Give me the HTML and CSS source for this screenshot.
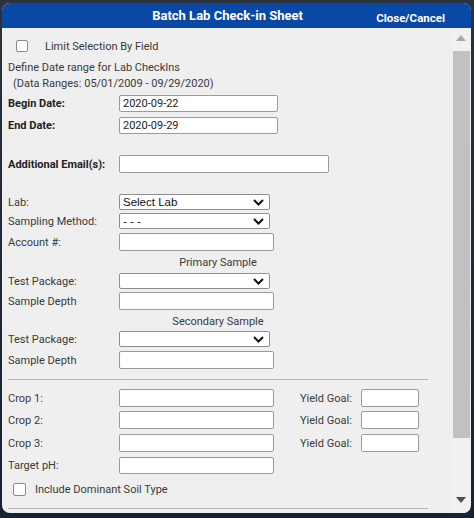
FILE: index.html
```html
<!DOCTYPE html>
<html>
<head>
<meta charset="utf-8">
<link rel="stylesheet" href="styles.css">
</head>
<body>
<div class="dialog">
  <div class="header">
    <div class="title">Batch Lab Check-in Sheet</div>
    <div class="close">Close/Cancel</div>
  </div>
  <div class="body">
    <div class="content">
      <div class="row r-first"><span class="cb cb-a"></span><span class="cb-text">Limit Selection By Field</span></div>
      <div class="text r-define">Define Date range for Lab CheckIns</div>
      <div class="text range">(Data Ranges: 05/01/2009 - 09/29/2020)</div>
      <div class="row r-begin"><span class="lbl bold">Begin Date:</span><span class="inp date">2020-09-22</span></div>
      <div class="row r-end"><span class="lbl bold">End Date:</span><span class="inp date">2020-09-29</span></div>
      <div class="row r-email"><span class="lbl bold">Additional Email(s):</span><span class="inp email"></span></div>
      <div class="row r-lab"><span class="lbl">Lab:</span><span class="sel"><span>Select Lab</span><svg width="11" height="7" viewBox="0 0 11 7"><polyline points="1,1 5.5,5.5 10,1" fill="none" stroke="#111" stroke-width="2"/></svg></span></div>
      <div class="row r-g3"><span class="lbl">Sampling Method:</span><span class="sel"><span>- - -</span><svg width="11" height="7" viewBox="0 0 11 7"><polyline points="1,1 5.5,5.5 10,1" fill="none" stroke="#111" stroke-width="2"/></svg></span></div>
      <div class="row r-g4"><span class="lbl">Account #:</span><span class="inp"></span></div>
      <div class="row r-g3 center">Primary Sample</div>
      <div class="row r-g3"><span class="lbl">Test Package:</span><span class="sel"><span></span><svg width="11" height="7" viewBox="0 0 11 7"><polyline points="1,1 5.5,5.5 10,1" fill="none" stroke="#111" stroke-width="2"/></svg></span></div>
      <div class="row r-g3"><span class="lbl">Sample Depth</span><span class="inp"></span></div>
      <div class="row r-g3 center">Secondary Sample</div>
      <div class="row r-g2"><span class="lbl">Test Package:</span><span class="sel"><span></span><svg width="11" height="7" viewBox="0 0 11 7"><polyline points="1,1 5.5,5.5 10,1" fill="none" stroke="#111" stroke-width="2"/></svg></span></div>
      <div class="row r-g4"><span class="lbl">Sample Depth</span><span class="inp"></span></div>
      <div class="rule rule-a"></div>
      <div class="row r-crop1"><span class="lbl">Crop 1:</span><span class="inp"></span><span class="yl">Yield Goal:</span><span class="inp small"></span></div>
      <div class="row r-g4"><span class="lbl">Crop 2:</span><span class="inp"></span><span class="yl">Yield Goal:</span><span class="inp small"></span></div>
      <div class="row r-g5"><span class="lbl">Crop 3:</span><span class="inp"></span><span class="yl">Yield Goal:</span><span class="inp small"></span></div>
      <div class="row r-g5"><span class="lbl">Target pH:</span><span class="inp ph"></span></div>
      <div class="row r-soil"><span class="cb cb-b"></span><span class="cb-text2">Include Dominant Soil Type</span></div>
      <div class="rule rule-b"></div>
    </div>
    <div class="scrollbar">
      <svg class="arrow-up" width="10" height="6" viewBox="0 0 10 6"><polygon points="0,6 5,0 10,6" fill="#a8a8a8"/></svg>
      <div class="thumb"></div>
      <div class="track-rest"></div>
      <svg class="arrow-down" width="10" height="6" viewBox="0 0 10 6"><polygon points="0,0 10,0 5,6" fill="#505050"/></svg>
    </div>
  </div>
</div>
</body>
</html>
```
FILE: styles.css
```css
html, body {
  margin: 0;
  padding: 0;
}
body {
  width: 474px;
  height: 518px;
  overflow: hidden;
  background: linear-gradient(180deg, #2c323c 0%, #1e2733 60%, #182234 100%);
  font-family: Roboto, "Liberation Sans", sans-serif;
  font-size: 11px;
  color: #3a3a3a;
}
.dialog {
  margin: 3px 0 0 2px;
  width: 469px;
  height: 510px;
  border-radius: 8px;
  overflow: hidden;
  display: flex;
  flex-direction: column;
  background: #efefef;
}
.header {
  height: 25px;
  flex: none;
  background: #0a48a6;
  color: #fff;
  display: flex;
  align-items: center;
  font-weight: bold;
}
.title {
  flex: 1;
  text-align: center;
  padding-left: 77px;
  font-size: 13px;
}
.close {
  font-size: 11.5px;
  padding: 4px 26px 0 0;
}
.body {
  flex: 1;
  display: flex;
  min-height: 0;
}
.content {
  flex: 1;
  padding: 0 24px 0 6px;
}
.row {
  display: flex;
  align-items: center;
}
.text {
  height: 16px;
  line-height: 16px;
}
.range { padding-left: 5px; }
.r-first { margin-top: 10px; height: 16px; }
.r-define { margin-top: 6px; }
.r-begin { margin-top: 3px; }
.r-end { margin-top: 5px; }
.r-email { margin-top: 21px; }
.r-lab { margin-top: 21px; }
.r-g2 { margin-top: 2px; }
.r-g3 { margin-top: 3px; }
.r-g4 { margin-top: 4px; }
.r-g5 { margin-top: 5px; }
.r-crop1 { margin-top: 9px; }
.r-soil { margin-top: 9px; }
.center {
  justify-content: center;
  height: 16px;
}
.cb {
  display: block;
  width: 12px;
  height: 12px;
  box-sizing: border-box;
  background: #fff;
  border: 1px solid #8a8a8a;
  border-radius: 2px;
  flex: none;
}
.cb-a { margin-left: 8px; }
.cb-text { margin-left: 17px; }
.cb-b { margin-left: 5px; width: 13px; height: 13px; }
.cb-text2 { margin-left: 9px; }
.lbl {
  width: 111px;
  flex: none;
}
.bold {
  font-weight: bold;
  color: #222;
}
.inp {
  display: flex;
  align-items: center;
  width: 155px;
  height: 18px;
  box-sizing: border-box;
  background: #fff;
  border: 1px solid #9a9a9a;
  border-radius: 2px;
  padding-left: 3px;
  color: #222;
  flex: none;
}
.date {
  width: 159px;
  height: 17px;
}
.email { width: 210px; }
.ph { height: 17px; }
.small { width: 58px; }
.yl {
  margin-left: 26px;
  width: 61px;
  flex: none;
}
.sel {
  display: flex;
  align-items: center;
  justify-content: space-between;
  width: 151px;
  height: 16px;
  box-sizing: border-box;
  background: #fff;
  border: 1px solid #8f8f8f;
  border-radius: 2px;
  padding: 0 5px 0 3px;
  font-family: "Liberation Sans", Arial, sans-serif;
  font-size: 11.5px;
  color: #111;
  flex: none;
}
.rule {
  height: 1px;
  background: #b4b4b4;
}
.rule-a { margin-top: 10px; }
.rule-b { margin-top: 12px; }
.scrollbar {
  width: 18px;
  flex: none;
  background: #f1f1f1;
  display: flex;
  flex-direction: column;
  align-items: center;
  margin-right: 1px;
}
.arrow-up { margin-top: 7px; flex: none; }
.thumb {
  width: 17px;
  height: 387px;
  margin-top: 10px;
  background: #c1c1c1;
  flex: none;
}
.track-rest { flex: 1; }
.arrow-down { margin-bottom: 10px; flex: none; }
```
